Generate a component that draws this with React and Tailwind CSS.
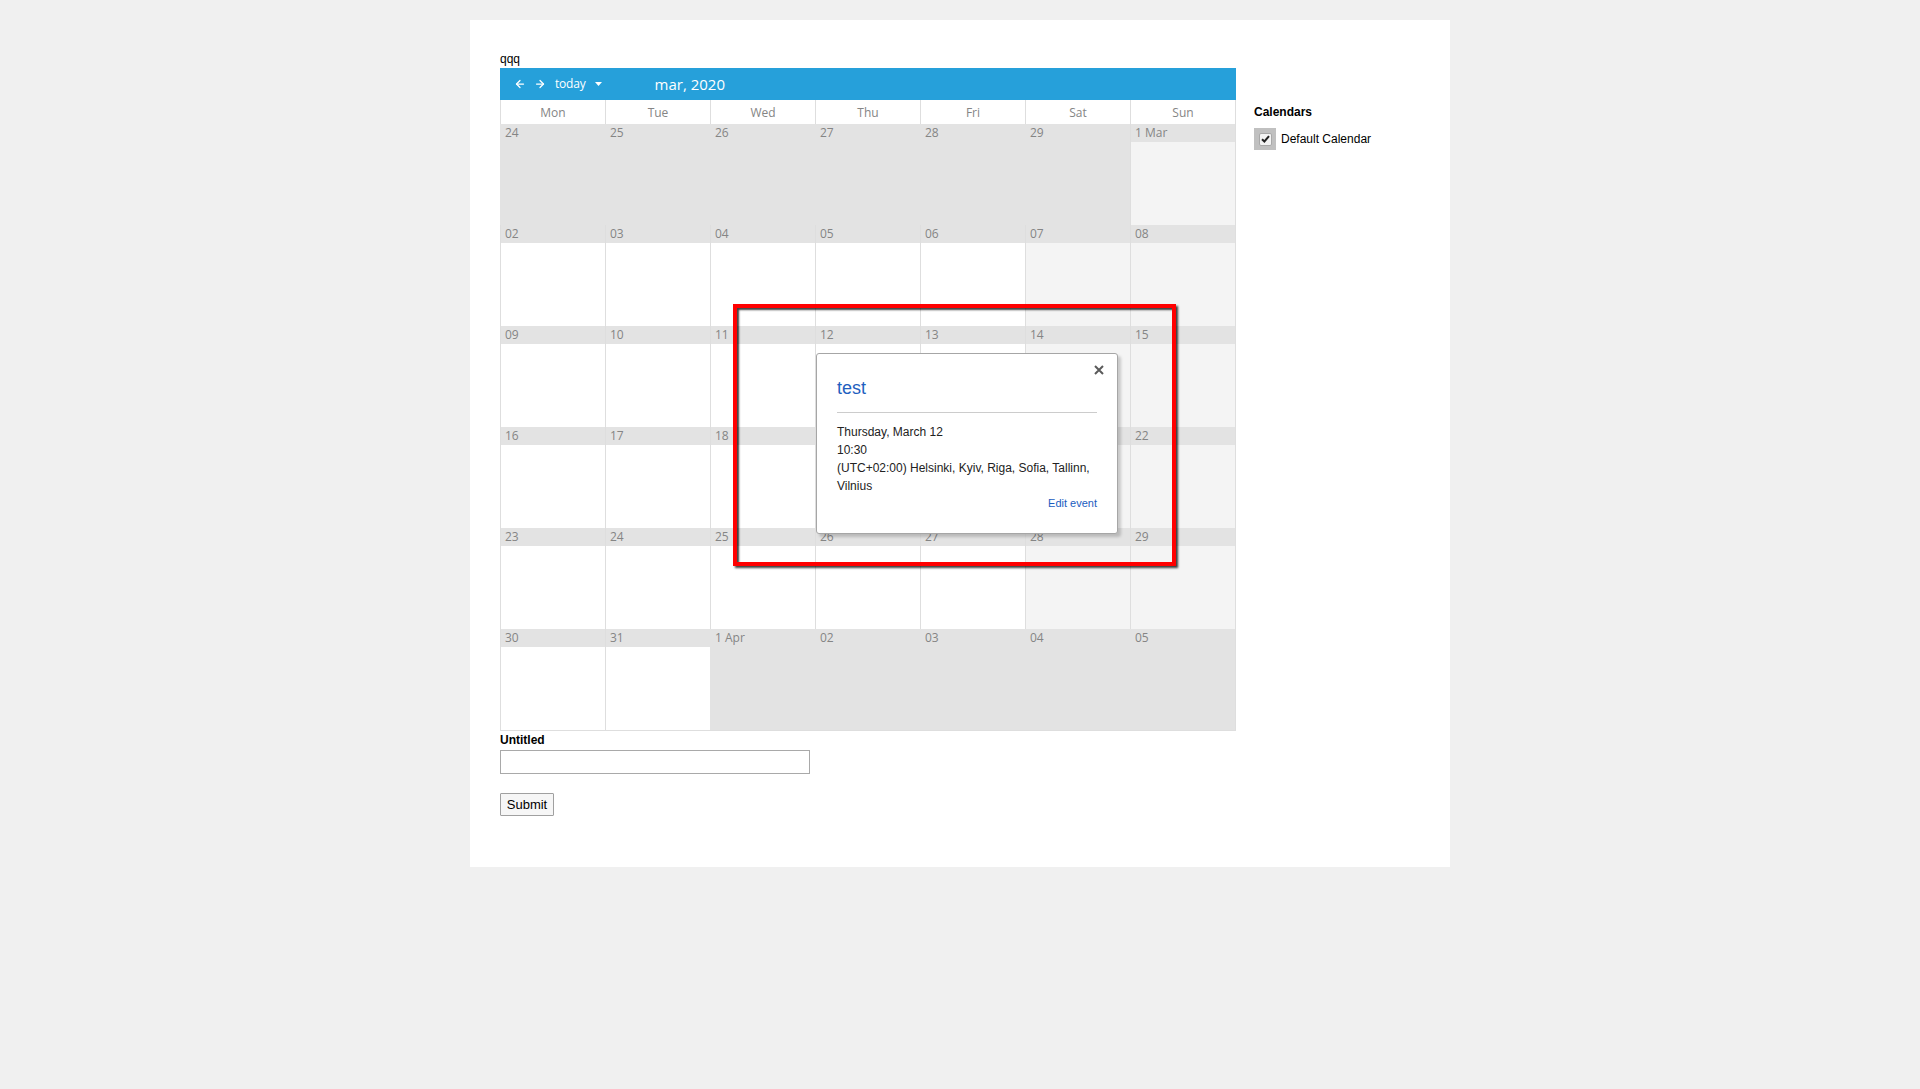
import { ArrowLeft, ArrowRight } from 'lucide-react'

const dayNames = ['Mon', 'Tue', 'Wed', 'Thu', 'Fri', 'Sat', 'Sun']

// kind: 'out' = outside current month, 'wk' = weekend, 'day' = regular day
const weeks = [
  [['24', 'out'], ['25', 'out'], ['26', 'out'], ['27', 'out'], ['28', 'out'], ['29', 'out'], ['1 Mar', 'wk']],
  [['02', 'day'], ['03', 'day'], ['04', 'day'], ['05', 'day'], ['06', 'day'], ['07', 'wk'], ['08', 'wk']],
  [['09', 'day'], ['10', 'day'], ['11', 'day'], ['12', 'day'], ['13', 'day'], ['14', 'wk'], ['15', 'wk']],
  [['16', 'day'], ['17', 'day'], ['18', 'day'], ['19', 'day'], ['20', 'day'], ['21', 'wk'], ['22', 'wk']],
  [['23', 'day'], ['24', 'day'], ['25', 'day'], ['26', 'day'], ['27', 'day'], ['28', 'wk'], ['29', 'wk']],
  [['30', 'day'], ['31', 'day'], ['1 Apr', 'out'], ['02', 'out'], ['03', 'out'], ['04', 'out'], ['05', 'out']],
]

const bodyBg = {
  out: 'bg-[#e3e3e3]',
  wk: 'bg-[#f4f4f4]',
  day: 'bg-white',
}

function DayCell({ label, kind }) {
  return (
    <div className={`flex flex-col border-l ${kind === 'out' ? 'border-[#e3e3e3]' : 'border-[#dedede]'}`}>
      <div className="h-[18px] bg-[#e3e3e3] pl-[4px] text-[12px] leading-[17px] text-[#858585]">{label}</div>
      <div className={`h-[83px] ${bodyBg[kind]}`} />
    </div>
  )
}

function EventPopup() {
  return (
    <div className="absolute left-[316px] top-[285px] w-[302px] rounded-[3px] border border-[#a6a6a6] bg-white px-[20px] pt-[22px] pb-[23px] shadow-[3px_3px_3px_rgba(0,0,0,0.18)] font-['Liberation_Sans',Arial,sans-serif]">
      <svg className="absolute right-[13px] top-[11px]" width="10" height="10" viewBox="0 0 10 10">
        <path d="M1 1 L9 9 M9 1 L1 9" stroke="#5a5a5a" strokeWidth="2" />
      </svg>
      <div className="h-[24px] text-[18px] leading-[24px] text-[#1f5fbf]">test</div>
      <div className="mt-[12px] border-t border-[#cccccc]" />
      <div className="pt-[10px] text-[12px] leading-[18px] text-[#222]">
        <div>Thursday, March 12</div>
        <div>10:30</div>
        <div>(UTC+02:00) Helsinki, Kyiv, Riga, Sofia, Tallinn, Vilnius</div>
      </div>
      <div className="mt-[1px] text-right text-[11px] leading-[14px] text-[#1a5cc0]">Edit event</div>
    </div>
  )
}

export default function App() {
  return (
    <div className="min-h-screen bg-[#f0f0f0] pt-[20px] font-['Liberation_Sans',Arial,sans-serif]">
      <div className="mx-auto flex h-[847px] w-[980px] bg-white pl-[30px] pt-[31px]">
        <div className="w-[736px]">
          <div className="h-[17px] text-[12px] leading-[17px] text-black">qqq</div>

          {/* Calendar */}
          <div className="relative font-['Open_Sans','Noto_Sans',sans-serif]">
            <div className="flex h-[32px] items-center bg-[#26a0da] pl-[14px] text-white">
              <ArrowLeft size={12} strokeWidth={2.5} />
              <ArrowRight size={12} strokeWidth={2.5} className="ml-[8px]" />
              <span className="ml-[9px] text-[12px] tracking-[-0.2px]">today</span>
              <svg className="ml-[9px]" width="7" height="4" viewBox="0 0 7 4">
                <path d="M0 0 H7 L3.5 4 Z" fill="white" />
              </svg>
              <span className="ml-[53px] text-[15px]">mar, 2020</span>
            </div>

            <div className="grid grid-cols-7 border-r border-[#dedede] bg-white">
              {dayNames.map((d) => (
                <div key={d} className="h-[24px] border-l border-[#dedede] text-center text-[12px] leading-[25px] text-[#858585]">
                  {d}
                </div>
              ))}
            </div>

            <div className="border-r border-b border-[#dedede]">
              {weeks.map((week, i) => (
                <div key={i} className="grid grid-cols-7">
                  {week.map(([label, kind], j) => (
                    <DayCell key={j} label={label} kind={kind} />
                  ))}
                </div>
              ))}
            </div>

            <EventPopup />

            {/* highlight frame */}
            <div className="absolute left-[233px] top-[236px] h-[262px] w-[443px] border-[4px] border-[#ff0000] shadow-[2px_2px_2px_rgba(0,0,0,0.75),inset_2px_2px_2px_rgba(0,0,0,0.75)]" />
          </div>

          <div className="mt-[2px] h-[17px] text-[12px] font-bold leading-[15px] text-black">Untitled</div>
          <input type="text" className="block h-[24px] w-[310px] border border-[#a9a9a9] bg-white" />
          <button className="mt-[19px] h-[23px] w-[54px] rounded-[1px] border border-[#a0a0a0] bg-[#f6f6f6] text-[13px] text-black">
            Submit
          </button>
        </div>

        {/* Calendars sidebar */}
        <div className="ml-[18px] pt-[53px]">
          <div className="text-[12px] font-bold leading-[16px] text-black">Calendars</div>
          <div className="mt-[8px] flex items-center">
            <div className="flex h-[22px] w-[22px] items-center justify-center bg-[#c0c0c0]">
              <div className="flex h-[13px] w-[13px] items-center justify-center rounded-[2px] border border-[#a8a8a8] bg-[#f3f3f3]">
                <svg width="9" height="8" viewBox="0 0 9 8">
                  <path d="M1 4.2 L3.4 6.5 L8 1.2" stroke="#222" strokeWidth="2" fill="none" />
                </svg>
              </div>
            </div>
            <span className="ml-[5px] text-[12px] text-black">Default Calendar</span>
          </div>
        </div>
      </div>
    </div>
  )
}
